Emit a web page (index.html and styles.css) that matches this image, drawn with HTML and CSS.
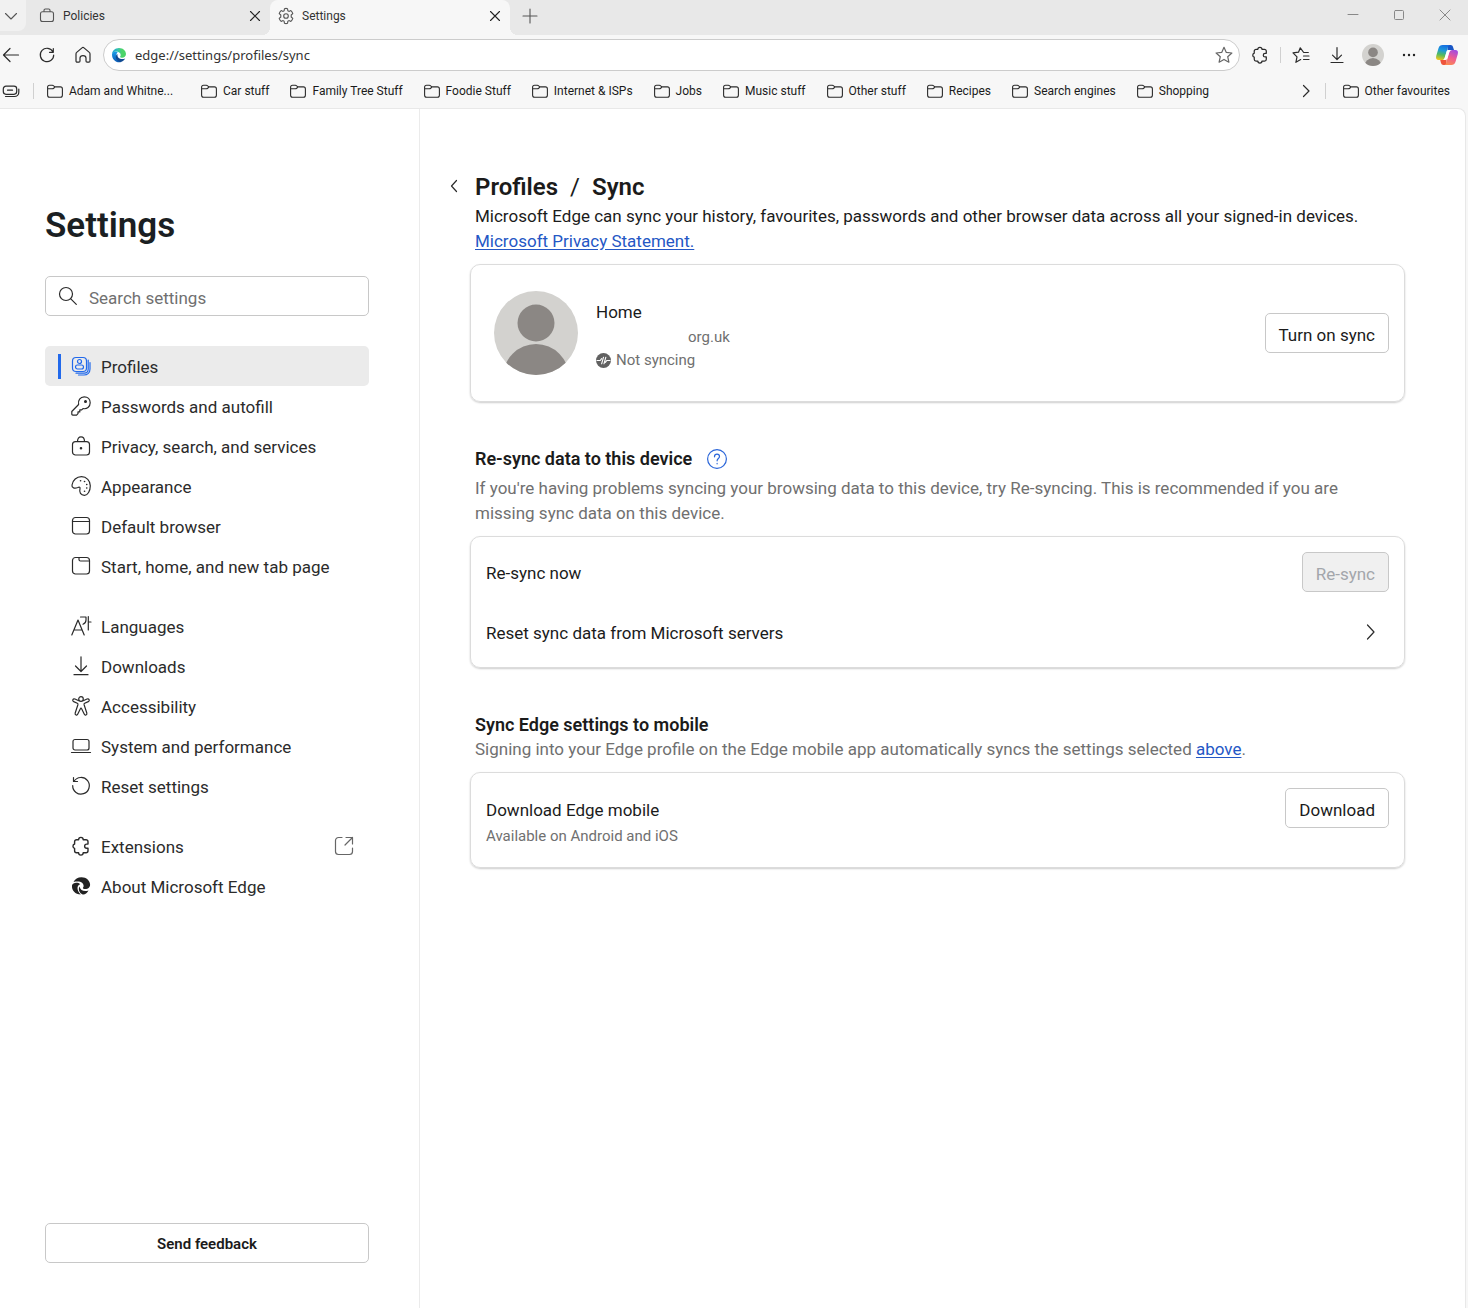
FILE: index.html
```html
<!DOCTYPE html>
<html lang="en">
<head>
    <meta charset="UTF-8">
    <title>Settings</title>
    <link rel="stylesheet" href="styles.css">
</head>
<body>
<svg class="sprite" aria-hidden="true">
    <symbol id="folder" viewBox="0 0 16 16">
        <path d="M.6 4.200c0-1.100.9-2 2-2h2.700c.5 0 1 .2 1.400.6l1.200 1.100h5.500c1.100 0 2 .9 2 2v6.300c0 1.100-.9 2-2 2H2.600c-1.100 0-2-.9-2-2zM.6 5.800h4.800c.5 0 .9-.2 1.300-.5l1.200-1.400"/>
    </symbol>
    <symbol id="close" viewBox="0 0 16 16">
        <path d="M3.500 3.500l9 9M12.500 3.500l-9 9"/>
    </symbol>
    <symbol id="puzzle" viewBox="0 0 20 20">
        <path d="M7.600 3.700a2.300 2.300 0 0 1 4.600 0h2.800a2 2 0 0 1 2 2v2.400h-1.300a2 2 0 0 0 0 4.100H17v2.600a2 2 0 0 1-2 2h-2.800a2.300 2.300 0 0 1-4.600 0H5.600a2 2 0 0 1-2-2v-2.400a2.300 2.300 0 0 1 0-4.400V5.700a2 2 0 0 1 2-2z"/>
    </symbol>
    <symbol id="download" viewBox="0 0 20 20">
        <path d="M10 .8v14.400M4.500 10l5.500 5.500 5.500-5.500M3 18.700h14"/>
    </symbol>
    <symbol id="person" viewBox="0 0 84 84">
        <clipPath id="round"><circle cx="42" cy="42" r="42"/></clipPath>
        <g clip-path="url(#round)" stroke="none">
            <rect width="84" height="84" fill="#d3d2cf"/>
            <circle cx="42" cy="32" r="18.500" fill="#8b8784"/>
            <circle cx="42" cy="86" r="33" fill="#8b8784"/>
        </g>
    </symbol>
</svg>

<div class="browser">
    <div class="tabs">
        <button class="tab-menu" aria-label="Tab actions"><svg class="icon" viewBox="0 0 16 16"><path d="M2.500 5.500L8 11l5.500-5.500"/></svg></button>
        <div class="tab">
            <svg class="icon" viewBox="0 0 16 16"><rect x="1.500" y="3.700" width="13" height="9.800" rx="2"/><path d="M5 3.500V2.300C5 1.500 5.600 1 6.300 1h3.400c.7 0 1.300.5 1.300 1.300v1.200"/></svg>
            <span>Policies</span>
            <button aria-label="Close tab"><svg class="icon dark"><use href="#close"/></svg></button>
        </div>
        <div class="tab active">
            <svg class="icon" viewBox="0 0 16 16"><circle cx="8" cy="8" r="2.300"/><path d="M6.500.7Q8 .1 9.500.7l.4 2.100 1 .6 2-.8q1.400 1.200 1.900 3L13.200 7v2l1.600 1.400q-.5 1.800-1.900 3l-2-.8-1 .6-.4 2.100q-1.500.6-3 0l-.4-2.100-1-.6-2 .8q-1.400-1.200-1.900-3L2.800 9V7L1.200 5.600q.5-1.800 1.900-3l2 .8 1-.6z"/></svg>
            <span>Settings</span>
            <button aria-label="Close tab"><svg class="icon dark"><use href="#close"/></svg></button>
        </div>
        <button class="new-tab" aria-label="New tab"><svg class="icon" viewBox="0 0 16 16"><path d="M8 1v14M1 8h14"/></svg></button>
        <div class="window-buttons">
            <button aria-label="Minimise"><svg viewBox="0 0 12 12"><path d="M1 5.500h10"/></svg></button>
            <button aria-label="Maximise"><svg viewBox="0 0 12 12"><rect x="1.500" y="1.500" width="9" height="9" rx="1"/></svg></button>
            <button aria-label="Close"><svg viewBox="0 0 12 12"><path d="M1 1l10 10M11 1L1 11"/></svg></button>
        </div>
    </div>

    <div class="toolbar">
        <button aria-label="Back"><svg viewBox="0 0 20 20"><path d="M17.500 10H3M9 3.500L2.500 10 9 16.500"/></svg></button>
        <button aria-label="Refresh"><svg viewBox="0 0 20 20"><path d="M16 7A6.700 6.700 0 1 0 16.700 10M16.300 3.500V7.300h-3.800"/></svg></button>
        <button aria-label="Home"><svg viewBox="0 0 20 20"><path d="M3 8.900c0-.6.200-1.100.7-1.500L9 2.900c.6-.5 1.400-.5 2 0l5.300 4.500c.5.400.7.900.7 1.500V16c0 .6-.5 1.100-1.100 1.100h-1.800c-.6 0-1.100-.5-1.100-1.100v-3c0-1.300-1.100-2.400-3-2.400s-3 1.100-3 2.400v3c0 .6-.5 1.100-1.100 1.100H4.100C3.500 17.100 3 16.600 3 16z"/></svg></button>
        <div class="address">
            <svg class="edge-logo" viewBox="0 0 16 16">
                <defs>
                    <linearGradient id="e1" x1="0" y1="0" x2="1" y2="0"><stop offset="0" stop-color="#1d9fd8"/><stop offset=".4" stop-color="#35c1b1"/><stop offset=".7" stop-color="#4bd468"/></linearGradient>
                    <linearGradient id="e2" x1="0" y1="0" x2="0" y2="1"><stop offset="0" stop-color="#1b9be8"/><stop offset="1" stop-color="#0c5bb5"/></linearGradient>
                </defs>
                <path fill="url(#e2)" d="M1 7.500C1 4.800 4.500 3.900 6.800 5.200 4.600 6.200 4.900 11.500 10.300 15c-4.900 1.400-9.300-2.200-9.300-7.500z"/>
                <path fill="#104a91" d="M6.600 7.100c-1.100 4 3.500 6.100 7.600 4.400C12.500 14.500 9.800 15.500 8 14.600c-3.800-1.600-4.100-6.100-1.400-7.500z"/>
                <path fill="url(#e1)" d="M1 7.700C1 3.800 4.100 1 8 1c4.200 0 7 3 7 6 0 2.400-1.900 3.700-3.800 3.700-1.200 0-2.200-.4-2.100-1 .1-.4.6-.8.6-1.700C9.700 5.800 7.400 4.600 5 4.600 3 4.600 1.200 5.900 1 7.700z"/>
            </svg>
            <input type="text" aria-label="Address" value="edge://settings/profiles/sync">
            <button aria-label="Add to favourites"><svg class="grey" viewBox="0 0 20 20"><path d="M10 2.300l2.300 5.100 5.600.6-4.200 3.700 1.200 5.500-4.900-2.800-4.900 2.800 1.200-5.500L2.100 8l5.600-.6z"/></svg></button>
        </div>
        <div class="tools">
            <button aria-label="Extensions"><svg class="thick"><use href="#puzzle"/></svg></button>
            <span class="line"></span>
            <button aria-label="Favourites"><svg viewBox="0 0 20 20"><path d="M17.300 7.500h-4.600L9.300 2.800 7.500 7.200 2 7.800l4 4-1.100 5.500 4.800-2.700M12.500 11h5.500M12.500 14.500h5.500"/></svg></button>
        </div>
        <div class="tools wide">
            <button aria-label="Downloads"><svg viewBox="0 0 20 20"><path d="M10 2.500v12M5.500 10.200l4.500 4.500 4.500-4.500M4 17.500h12"/></svg></button>
            <button aria-label="Profile"><svg class="avatar-small"><use href="#person"/></svg></button>
            <button aria-label="More"><svg viewBox="0 0 20 20"><g fill="#222" stroke="none"><circle cx="5" cy="10" r="1.200"/><circle cx="10" cy="10" r="1.200"/><circle cx="15" cy="10" r="1.200"/></g></svg></button>
            <button class="copilot" aria-label="Copilot">
                <svg viewBox="0 0 24 24">
                    <defs>
                        <linearGradient id="c1" x1=".5" y1="0" x2=".3" y2="1"><stop offset="0" stop-color="#166fe0"/><stop offset=".35" stop-color="#1d9ad9"/><stop offset=".65" stop-color="#52bb5f"/><stop offset="1" stop-color="#f1c61b"/></linearGradient>
                        <linearGradient id="c2" x1=".7" y1="0" x2=".3" y2="1"><stop offset="0" stop-color="#a24be0"/><stop offset=".5" stop-color="#ef5b91"/><stop offset="1" stop-color="#fa8a51"/></linearGradient>
                    </defs>
                    <g stroke="none">
                        <path fill="#1956c6" d="M12.500 2h3.200c1.200 0 1.900.7 2.300 1.900L19 7h-2.500c-2.200 0-3.400.8-4 2.800z"/>
                        <path fill="#ee543c" d="M11.500 22H8.400c-1.200 0-2-.6-2.400-1.900L5.200 17h2.500c2.100 0 3.200-1 3.900-3z"/>
                        <path fill="url(#c1)" d="M7.700 2h7.200c-1.100 0-1.600.9-2 2.200l-3 10c-.6 2-1.400 2.800-3 2.800H3.600C1.500 17 .6 15.500 1.200 13l2.300-7.800C4.200 3 5.500 2 7.700 2z"/>
                        <path fill="url(#c2)" d="M16.300 22H9.200c1.100 0 1.600-.9 2-2.200l3-10c.6-2 1.400-2.800 3-2.800h3.200c2.100 0 3 1.500 2.400 4l-2.300 7.800c-.7 2.200-2 3.200-4.200 3.200z"/>
                        <path fill="#fff" d="M10.700 11.500l1-3.200c.3-.9.800-1.300 1.500-1.300h3.300c-1.500.3-2 1.300-2.500 2.800l-1.600 5.300c-.4 1.200-1 1.900-2 1.900H7.500c1.400-.2 2-1.200 2.400-2.800z"/>
                    </g>
                </svg>
            </button>
        </div>
    </div>

    <div class="bookmarks">
        <button aria-label="Workspaces"><svg viewBox="0 0 20 20"><path d="M5 5.200h8A2.700 2.700 0 0 1 15.700 7.900v2.700a2.700 2.700 0 0 1-2.700 2.700H5a2.700 2.700 0 0 1-2.700-2.700V7.900A2.700 2.700 0 0 1 5 5.200zM6.500 9.200h5M4.500 15.500H13.500A4.300 4.300 0 0 0 17.800 11.200V8"/></svg></button>
        <span class="line"></span>
        <ul>
            <li class="long"><a href="#"><svg><use href="#folder"/></svg>Adam and Whitne...</a></li>
            <li><a href="#"><svg><use href="#folder"/></svg>Car stuff</a></li>
            <li><a href="#"><svg><use href="#folder"/></svg>Family Tree Stuff</a></li>
            <li><a href="#"><svg><use href="#folder"/></svg>Foodie Stuff</a></li>
            <li><a href="#"><svg><use href="#folder"/></svg>Internet &amp; ISPs</a></li>
            <li><a href="#"><svg><use href="#folder"/></svg>Jobs</a></li>
            <li><a href="#"><svg><use href="#folder"/></svg>Music stuff</a></li>
            <li><a href="#"><svg><use href="#folder"/></svg>Other stuff</a></li>
            <li><a href="#"><svg><use href="#folder"/></svg>Recipes</a></li>
            <li><a href="#"><svg><use href="#folder"/></svg>Search engines</a></li>
            <li><a href="#"><svg><use href="#folder"/></svg>Shopping</a></li>
        </ul>
        <div class="more">
            <button aria-label="More favourites"><svg viewBox="0 0 20 20"><path d="M7.500 4.500L13 10l-5.500 5.500"/></svg></button>
            <span class="line"></span>
            <a href="#"><svg><use href="#folder"/></svg>Other favourites</a>
        </div>
    </div>

    <div class="page">
        <div class="sidebar">
            <h1>Settings</h1>
            <label class="search">
                <svg viewBox="0 0 20 20"><circle cx="8" cy="8" r="6.500"/><path d="M12.800 12.800l5.500 5.500"/></svg>
                <input type="text" placeholder="Search settings" aria-label="Search settings">
            </label>
            <ul>
                <li class="selected"><a href="#"><svg viewBox="0 0 20 20"><rect x="1.500" y="1.500" width="14" height="14" rx="3.500"/><circle cx="8.500" cy="5.500" r="2"/><rect x="4.500" y="9" width="8" height="4" rx="2"/><path d="M17.200 4v9c0 2.500-1.500 4.200-4 4.200H5M19 6.500V13c0 3.500-2.500 6-6 6H7.500"/></svg>Profiles</a></li>
                <li><a href="#"><svg viewBox="0 0 20 20"><path d="M7.600 8.500C6.700 4.300 9.300.800 13.200.8c3.500 0 6 2.500 6 6 0 4-3.400 6.600-7.200 5.800l-1.300 1.300H8.800v2H7v1.800l-1.400 1.400H1.800c-.6 0-1-.4-1-1v-2.600z"/><circle cx="14.500" cy="5.500" r=".9" fill="#222"/></svg>Passwords and autofill</a></li>
                <li><a href="#"><svg viewBox="0 0 20 20"><rect x="1.500" y="5.600" width="17" height="13.400" rx="3"/><path d="M6.500 5.500C6.500 2.500 7.800.800 10 .8s3.500 1.700 3.500 4.700"/><circle cx="10" cy="12.300" r=".7" fill="#222"/></svg>Privacy, search, and services</a></li>
                <li><a href="#"><svg viewBox="0 0 20 20"><path d="M1 9C1.700 4.200 5.600.700 10.500.7c5 0 8.800 4 8.800 9 0 5.300-2.600 9.600-5.800 9.600-3.800 0-5.500-2.800-4.500-6.600.4-1.600-.7-2-2.200-1.200-3.100 1.400-6.300.5-5.800-2.500z"/><path class="dots" d="M9.500 4.800h.1M13.500 5.500h.1M15.700 8.500h.1M15.700 12h.1M13.500 15.300h.1"/></svg>Appearance</a></li>
                <li><a href="#"><svg viewBox="0 0 20 20"><rect x="1.500" y="1.500" width="17" height="16.500" rx="3"/><path d="M1.500 5.500h17"/></svg>Default browser</a></li>
                <li><a href="#"><svg viewBox="0 0 20 20"><rect x="1.500" y="1.500" width="17" height="16.500" rx="3"/><path d="M8 1.500v2c0 1 .6 1.500 1.500 1.500h9"/></svg>Start, home, and new tab page</a></li>
                <li class="group"><a href="#"><svg viewBox="0 0 20 20"><path d="M.8 19L7 4l6.200 15M3 14h8M9.500 1h5.500v3c0 2-1.200 3.500-3 4.200M17.300.500v13.500M17.300 6H20"/></svg>Languages</a></li>
                <li><a href="#"><svg><use href="#download"/></svg>Downloads</a></li>
                <li><a href="#"><svg viewBox="0 0 20 20"><circle cx="10" cy="3" r="2.300"/><path d="M7.800 4.700L4 3C1.800 2.200.900 4.800 2.700 5.600l3.600 1.700c.6.300.8.700.6 1.400L4.200 17c-.6 2 1.800 2.900 2.600 1l2.700-5.500c.2-.5.800-.5 1 0l2.700 5.500c.8 1.900 3.200 1 2.600-1l-2.700-8.300c-.2-.7 0-1.100.6-1.400l3.600-1.700C19.100 4.800 18.200 2.200 16 3l-3.800 1.700"/></svg>Accessibility</a></li>
                <li><a href="#"><svg viewBox="0 0 20 20"><rect x="2" y="3.500" width="16" height="10.500" rx="2"/><path d="M.5 16.500h19"/></svg>System and performance</a></li>
                <li><a href="#"><svg viewBox="0 0 20 20"><path d="M2.500 1.500v4h4M3 5.300A8.300 8.300 0 1 1 1.700 9.500"/></svg>Reset settings</a></li>
                <li class="group"><a href="#"><svg class="thick"><use href="#puzzle"/></svg>Extensions<svg class="external" viewBox="0 0 20 20"><path d="M8 1.500H4.500a3 3 0 0 0-3 3v11a3 3 0 0 0 3 3h11a3 3 0 0 0 3-3V12M12 1.500h6.500V8M18.500 1.500l-7.500 7.500"/></svg></a></li>
                <li><a href="#"><svg viewBox="0 0 20 20"><g fill="#222" stroke="none"><path d="M2.500 6C4 3 6.800 1.200 10.500 1.200c5 0 8.600 3.600 8.600 7.500 0 2.800-2.300 4.300-4.800 4.300-1.500 0-2.400-.4-2.400-1 0-.4.7-.8.7-2C12.600 7 9.500 4.600 2.500 6z"/><path d="M1 9.500c.6-3 5.800-3.500 8.200-1.300-3 .5-4.300 5.600.5 10.300C4.300 18.500.500 14.300 1 9.500z"/><path d="M8.700 10.500c.4 4 4.600 5.500 8.800 4-1.600 3-4 4.500-5.800 4C8 17 6.900 12.600 8.700 10.500z"/></g></svg>About Microsoft Edge</a></li>
            </ul>
            <button class="feedback">Send feedback</button>
        </div>

        <div class="content">
            <div class="title">
                <button aria-label="Back"><svg viewBox="0 0 14 14"><path d="M9.500 1.500L4.500 7l5 5.500"/></svg></button>
                <h2>Profiles<span>/</span>Sync</h2>
            </div>
            <p class="intro">Microsoft Edge can sync your history, favourites, passwords and other browser data across all your signed-in devices.<br><a href="#">Microsoft Privacy Statement.</a></p>
            <div class="card profile">
                <svg class="avatar"><use href="#person"/></svg>
                <div class="info">
                    <p class="name">Home</p>
                    <p class="mail">org.uk</p>
                    <p class="status"><svg viewBox="0 0 16 16"><circle cx="8" cy="8" r="8" fill="#616161" stroke="none"/><path d="M1 8h3.500l1.500-2M15 8h-3.500L10 10M6 11.500L8 4.500M8.500 11.500l2-7"/></svg>Not syncing</p>
                </div>
                <button class="btn">Turn on sync</button>
            </div>

            <h3 class="with-help">Re-sync data to this device <button aria-label="Help"><svg viewBox="0 0 20 20"><circle cx="10" cy="10" r="9.400"/><path d="M7.500 7.800c0-1.500 1-2.600 2.500-2.600s2.500 1 2.500 2.400c0 1.900-2.400 2-2.400 4.200M10.100 14.400v.4"/></svg></button></h3>
            <p class="text">If you're having problems syncing your browsing data to this device, try Re-syncing. This is recommended if you are missing sync data on this device.</p>
            <div class="card">
                <div class="row">
                    <span>Re-sync now</span>
                    <button class="btn" disabled>Re-sync</button>
                </div>
                <a class="row" href="#">
                    <span>Reset sync data from Microsoft servers</span>
                    <svg viewBox="0 0 20 20"><path d="M7.500 3l6.500 7-6.500 7"/></svg>
                </a>
            </div>

            <h3>Sync Edge settings to mobile</h3>
            <p class="text">Signing into your Edge profile on the Edge mobile app automatically syncs the settings selected <a href="#">above</a>.</p>
            <div class="card">
                <div class="row mobile">
                    <div>
                        <p class="name">Download Edge mobile</p>
                        <p class="small">Available on Android and iOS</p>
                    </div>
                    <button class="btn">Download</button>
                </div>
            </div>
        </div>
    </div>
</div>
</body>
</html>
```
FILE: styles.css
```css
*{
    margin: 0;
    padding: 0;
    box-sizing: border-box;
}
body{
    background: #f7f7f7;
    color: #1b1b1b;
    font-family: Roboto, "Liberation Sans", sans-serif;
    font-size: 17px;
    line-height: 25px;
}
ul{
    list-style: none;
}
a{
    color: inherit;
    text-decoration: none;
}
button, input{
    border: 0;
    background: none;
    color: inherit;
    font: inherit;
    outline: none;
}
button{
    display: flex;
    align-items: center;
    justify-content: center;
}
svg{
    flex: none;
    width: 20px;
    height: 20px;
    fill: none;
    stroke: #2b2b2b;
    stroke-width: 1.2;
    stroke-linecap: round;
    stroke-linejoin: round;
    overflow: visible;
}
.sprite{
    position: absolute;
    width: 0;
    height: 0;
}
.browser{
    display: flex;
    flex-direction: column;
    min-height: 100vh;
}
.line{
    width: 1px;
    height: 16px;
    background: #d0d0d0;
}

/* tab strip */
.tabs{
    display: flex;
    height: 35px;
    background: #e8e8e8;
    font-size: 12px;
    color: #333;
}
.tabs .icon{
    width: 16px;
    height: 16px;
    stroke: #555;
    stroke-width: 1.1;
}
.tabs .dark{
    stroke: #222;
}
.tab-menu{
    width: 26px;
    height: 31px;
    padding-right: 4px;
    background: #f1f1f1;
    border-radius: 0 0 8px 0;
}
.tab{
    display: flex;
    align-items: center;
    gap: 8px;
    width: 244px;
    padding: 0 7px 4px 13px;
}
.tab span{
    flex: 1;
    padding-top: 1px;
}
.tab.active{
    position: relative;
    width: 240px;
    padding-left: 8px;
    background: #f7f7f7;
    border-radius: 8px 8px 0 0;
}
.tab.active:before, .tab.active:after{
    content: "";
    position: absolute;
    bottom: 0;
    left: -8px;
    width: 8px;
    height: 8px;
    background: radial-gradient(circle at 0 0, #e8e8e8 8px, #f7f7f7 8px);
}
.tab.active:after{
    left: 100%;
    background: radial-gradient(circle at 100% 0, #e8e8e8 8px, #f7f7f7 8px);
}
.new-tab{
    width: 40px;
    height: 31px;
}
.window-buttons{
    display: flex;
    margin-left: auto;
}
.window-buttons button{
    width: 46px;
    height: 30px;
}
.window-buttons svg{
    width: 12px;
    height: 12px;
    stroke: #888;
    stroke-width: 1;
}

/* address bar */
.toolbar{
    display: flex;
    align-items: center;
    gap: 16px;
    height: 40px;
    padding: 0 9px 0 1px;
}
.address{
    display: flex;
    flex: 1;
    align-items: center;
    gap: 8px;
    height: 32px;
    margin: 0 -6px;
    padding: 0 5px 0 7px;
    background: #fff;
    border: 1px solid #ccc;
    border-radius: 16px;
}
.address input{
    flex: 1;
    font: 13px "Noto Sans", sans-serif;
    color: #333;
}
.address .edge-logo{
    width: 16px;
    height: 16px;
    stroke: none;
}
.grey{
    stroke: #666;
}
.thick{
    stroke-width: 1.4;
}
.toolbar .thick{
    width: 18px;
    height: 18px;
}
.tools{
    display: flex;
    align-items: center;
    gap: 10px;
}
.tools.wide{
    gap: 16px;
}
.tools button{
    width: 20px;
    height: 24px;
}
.tools .avatar-small{
    width: 22px;
    height: 22px;
}
.tools .copilot{
    width: 24px;
}
.copilot svg{
    width: 24px;
    height: 24px;
}

/* favourites bar */
.bookmarks{
    display: flex;
    align-items: center;
    height: 33px;
    padding: 0 0 1px 1px;
    font-size: 12px;
}
.bookmarks .line{
    margin-left: 12px;
}
.bookmarks ul{
    display: flex;
    gap: 21px;
    margin-left: 13px;
}
.bookmarks .long{
    width: 133px;
}
.bookmarks a{
    display: flex;
    align-items: center;
    gap: 6px;
    white-space: nowrap;
}
.bookmarks a svg{
    width: 16px;
    height: 16px;
    stroke-width: 1.1;
}
.more{
    display: flex;
    align-items: center;
    gap: 17px;
    margin-left: auto;
    padding-right: 18px;
}
.more .line{
    margin: 0 0 0 -8px;
}

/* settings page */
.page{
    display: flex;
    flex: 1;
    margin-right: 2px;
    background: #fff;
    border: 1px solid #e8e8e8;
    border-width: 1px 1px 0 0;
    border-radius: 0 8px 0 0;
}
.sidebar{
    display: flex;
    flex-direction: column;
    width: 420px;
    padding: 93px 50px 45px 45px;
    border-right: 1px solid #ebebeb;
    color: #2b2b2b;
}
h1{
    margin-bottom: 26px;
    font-size: 35px;
    font-weight: 600;
    line-height: 48px;
    color: #1b1f23;
}
.search{
    display: flex;
    align-items: center;
    gap: 11px;
    height: 40px;
    margin-bottom: 30px;
    padding: 0 12px;
    border: 1px solid #c8c8c8;
    border-radius: 5px;
}
.search input{
    flex: 1;
    min-width: 0;
    padding-top: 4px;
}
.search input::placeholder{
    color: #707070;
}
.sidebar li a{
    display: flex;
    align-items: center;
    gap: 10px;
    height: 40px;
    padding: 3px 15px 0 26px;
    border-radius: 5px;
}
.sidebar li svg{
    margin-bottom: 3px;
}
.sidebar .group{
    margin-top: 20px;
}
.sidebar .selected a{
    position: relative;
    background: #ebebeb;
}
.sidebar .selected a:before{
    content: "";
    position: absolute;
    left: 13px;
    top: 8px;
    width: 3px;
    height: 25px;
    background: #2169eb;
}
.sidebar .selected svg{
    stroke: #2169eb;
}
.sidebar .external{
    margin-left: auto;
    stroke: #666;
}
.dots{
    stroke-width: 1.6;
}
.feedback{
    height: 40px;
    margin-top: auto;
    padding-top: 2px;
    border: 1px solid #c8c8c8;
    border-radius: 5px;
    font-size: 15px;
    font-weight: 600;
    color: #1b1b1b;
}

.content{
    flex: 1;
    padding: 62px 60px 40px 50px;
}
.title{
    display: flex;
    align-items: center;
    gap: 14px;
    margin-left: -23px;
}
.title svg{
    width: 14px;
    height: 14px;
    margin-bottom: 3px;
}
h2{
    font-size: 24px;
    font-weight: 600;
    line-height: 33px;
}
h2 span{
    margin: 0 12px;
    font-weight: 400;
}
.intro, .text, h3{
    padding-left: 5px;
}
.intro a, .text a{
    color: #2457c5;
    text-decoration: underline;
    text-underline-offset: 2px;
}
.text{
    max-width: 900px;
    color: #707070;
}
h3{
    display: flex;
    align-items: center;
    gap: 15px;
    margin-top: 44px;
    font-size: 18px;
    font-weight: 600;
}
h3.with-help{
    padding-bottom: 5px;
}
h3 svg{
    stroke: #2b66d9;
}
.card{
    margin-top: 10px;
    padding: 15px;
    border: 1px solid #dcdcdc;
    border-radius: 10px;
    box-shadow: 0 1px 2px rgba(0, 0, 0, .2);
}
.profile{
    display: flex;
    align-items: center;
    gap: 18px;
    height: 138px;
    padding-left: 23px;
}
.avatar{
    width: 84px;
    height: 84px;
}
.info{
    flex: 1;
    padding-top: 4px;
}
.mail, .status, .small{
    font-size: 15px;
    color: #707070;
}
.mail{
    padding-left: 92px;
}
.status{
    display: flex;
    align-items: center;
    gap: 5px;
    line-height: 20px;
}
.status svg{
    width: 15px;
    height: 15px;
    stroke: #fff;
}
.btn{
    height: 40px;
    padding: 4px 13px 0;
    border: 1px solid #c8c8c8;
    border-radius: 5px;
    background: #fff;
}
.btn:disabled{
    background: #f0f0f0;
    color: #a3a6ab;
}
.row{
    display: flex;
    align-items: center;
    justify-content: space-between;
    height: 40px;
}
.row span{
    padding-top: 3px;
}
.row + .row{
    margin-top: 20px;
    padding-right: 9px;
}
.row.mobile{
    align-items: flex-start;
    height: 64px;
}
.mobile .name{
    padding-top: 8px;
    line-height: 28px;
}
```
